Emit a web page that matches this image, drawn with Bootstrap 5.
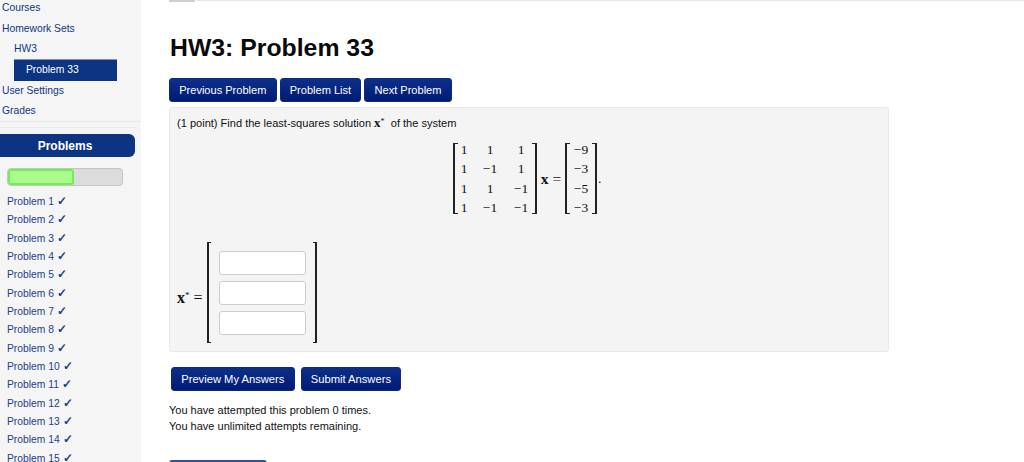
<!DOCTYPE html>
<html lang="en">
<head>
<meta charset="utf-8">
<title>HW3: Problem 33</title>
<link href="https://cdn.jsdelivr.net/npm/bootstrap@5.3.0/dist/css/bootstrap.min.css" rel="stylesheet">
<style>
html,body{height:462px;overflow:hidden}
body{font-family:"Liberation Sans",Arial,sans-serif;font-size:11px;color:#111;background:#fff}
.page-wrap{height:462px;overflow:hidden}
.side{width:141px;flex:none;background:#f5f5f5;height:462px;overflow:hidden;font-size:10.3px}
.side-nav{margin-top:-1.8px;height:123.8px;border-bottom:1px solid #e6e6e6}
.side-nav a{display:block;color:#0e3685;text-decoration:none;line-height:20.6px;height:20.6px;padding-left:2px}
.side-nav a.lvl2{margin-left:14px;width:103px;padding-left:0}
.side-nav a.on{background:#0d3383;color:#fff;padding-left:12px;border-top:1px solid #7f90b8;margin-top:-1px;height:21.6px}
.side-well{margin-top:5px;border:1px solid #ebebeb;border-left:0;border-right:0;border-top-right-radius:7px;padding-top:6px;background:#f5f5f5}
.prob-head{width:135px;height:23px;background:#0d3383;color:#fff;font-weight:700;font-size:12px;line-height:24px;padding-right:5px;text-align:center;border-radius:0 6px 6px 0}
.meter{margin:11px 0 0 7px;width:116px;height:18px;background:#dcdcdc;border:1px solid #c4c4c4;border-radius:4px;overflow:hidden}
.meter-fill{height:100%;background:#a8fd8c;border:2px solid #72ef4e;border-radius:3px}
.plist{margin-top:7px;padding-left:7px}
.plist a{display:block;color:#1b3f8f;text-decoration:none;line-height:18.35px;height:18.35px}
.tick{font-size:12px;line-height:1;font-weight:700}
.main-col{padding:0 0 0 28px;flex:1;min-width:0}
.top-rule{height:1px;background:#e6e6e6;margin-left:27px}
.top-tab{width:26px;height:2px;background:#cfcfcf;margin-left:-27px}
.ttl{font-size:24.8px;font-weight:700;color:#0a0a0a;line-height:30px;margin:32px 0 0 1px}
.navy-btn{font-size:11.05px;line-height:14px;height:24px;padding:4px 9.2px;color:#fff;border:1px solid #0b2a7c;border-radius:3px;background:linear-gradient(#0c3088,#001a78);white-space:nowrap}
.navy-btn:hover{color:#fff}
.btn-row1{margin-top:15px;gap:3px}
.prob-box{width:720px;height:245px;margin-top:5px;background:#f4f4f4;border:1px solid #e9e9e9;border-radius:3px;padding:8px 7px}
.mx{font-family:"Liberation Serif","Times New Roman",serif;color:#111;font-size:13.5px}
.stmt{line-height:14px;font-size:11.05px}
.stmt b{font-family:"Liberation Serif",serif;font-size:13px}
.stmt sup{font-size:8px;top:-.4em;font-family:"Liberation Serif",serif}
.disp{margin:13px 0 0 276px;height:71px}
.brk{width:5px;flex:none;border:1px solid #222}
.brk.l{border-right:0;border-left-width:2px}
.brk.r{border-left:0;border-right-width:2px}
.mtx{display:grid;grid-auto-rows:19.3px;align-items:center;text-align:center;margin-top:-2.5px;height:78px}
.mtx.a{grid-template-columns:12px 40px 22px}
.mtx.b{grid-template-columns:22px}
.eq{white-space:nowrap;width:28px;text-align:center;font-size:15.5px}
.period{padding:2px 0 0 1px}
.ans{margin-top:27px;height:102px}
.ans .eq{width:30px;text-align:left;padding-top:11px;font-size:16px}
.ans sup{font-size:9px}
.ans .brk{width:4px;height:101px}
.stack{width:87px;margin:2px 7px 0 8px;gap:6px}
.stack .form-control{height:24px;padding:0 4px;border:1px solid #ccc;border-radius:3px;background:#fff;box-shadow:none}
.btn-row2{margin:15px 0 0 2px;gap:6px}
.btn-row2 .navy-btn{font-size:11.2px;padding:4px 9.2px}
.attempts{margin-top:11px;line-height:16px;color:#111}
.cut-btn{width:98px;height:24px;margin-top:26px;background:#2f5597;border-radius:3px}
</style>
</head>
<body>
<div class="page-wrap d-flex">
  <aside class="side">
    <nav class="side-nav">
      <a href="#">Courses</a>
      <a href="#">Homework Sets</a>
      <a class="lvl2" href="#">HW3</a>
      <a class="lvl2 on" href="#">Problem 33</a>
      <a href="#">User Settings</a>
      <a href="#">Grades</a>
    </nav>
    <div class="side-well">
      <div class="prob-head">Problems</div>
      <div class="meter"><div class="meter-fill" style="width:58%"></div></div>
      <div class="plist">
        <a href="#">Problem 1 <span class="tick">✓</span></a>
        <a href="#">Problem 2 <span class="tick">✓</span></a>
        <a href="#">Problem 3 <span class="tick">✓</span></a>
        <a href="#">Problem 4 <span class="tick">✓</span></a>
        <a href="#">Problem 5 <span class="tick">✓</span></a>
        <a href="#">Problem 6 <span class="tick">✓</span></a>
        <a href="#">Problem 7 <span class="tick">✓</span></a>
        <a href="#">Problem 8 <span class="tick">✓</span></a>
        <a href="#">Problem 9 <span class="tick">✓</span></a>
        <a href="#">Problem 10 <span class="tick">✓</span></a>
        <a href="#">Problem 11 <span class="tick">✓</span></a>
        <a href="#">Problem 12 <span class="tick">✓</span></a>
        <a href="#">Problem 13 <span class="tick">✓</span></a>
        <a href="#">Problem 14 <span class="tick">✓</span></a>
        <a href="#">Problem 15 <span class="tick">✓</span></a>
      </div>
    </div>
  </aside>
  <main class="main-col">
    <div class="top-rule"><div class="top-tab"></div></div>
    <h1 class="ttl">HW3: Problem 33</h1>
    <div class="d-flex btn-row1">
      <a class="btn navy-btn" href="#">Previous Problem</a>
      <a class="btn navy-btn" href="#">Problem List</a>
      <a class="btn navy-btn" href="#">Next Problem</a>
    </div>
    <section class="prob-box">
      <div class="stmt">(1 point) Find the least-squares solution <b>x</b><sup>*</sup>&nbsp; of the system</div>
      <div class="disp mx d-flex align-items-stretch">
        <span class="brk l"></span>
        <div class="mtx a">
          <span>1</span><span>1</span><span>1</span>
          <span>1</span><span>−1</span><span>1</span>
          <span>1</span><span>1</span><span>−1</span>
          <span>1</span><span>−1</span><span>−1</span>
        </div>
        <span class="brk r"></span>
        <span class="eq align-self-center"><b>x</b> =</span>
        <span class="brk l"></span>
        <div class="mtx b"><span>−9</span><span>−3</span><span>−5</span><span>−3</span></div>
        <span class="brk r"></span>
        <span class="period align-self-center">.</span>
      </div>
      <div class="ans mx d-flex align-items-center">
        <span class="eq"><b>x</b><sup>*</sup> =</span>
        <span class="brk l"></span>
        <div class="stack d-flex flex-column">
          <input class="form-control" type="text" aria-label="answer 1">
          <input class="form-control" type="text" aria-label="answer 2">
          <input class="form-control" type="text" aria-label="answer 3">
        </div>
        <span class="brk r"></span>
      </div>
    </section>
    <div class="d-flex btn-row2">
      <button class="btn navy-btn" type="button">Preview My Answers</button>
      <button class="btn navy-btn" type="button">Submit Answers</button>
    </div>
    <div class="attempts">You have attempted this problem 0 times.<br>You have unlimited attempts remaining.</div>
    <div class="cut-btn"></div>
  </main>
</div>
<script src="https://cdn.jsdelivr.net/npm/bootstrap@5.3.0/dist/js/bootstrap.bundle.min.js"></script>
</body>
</html>
